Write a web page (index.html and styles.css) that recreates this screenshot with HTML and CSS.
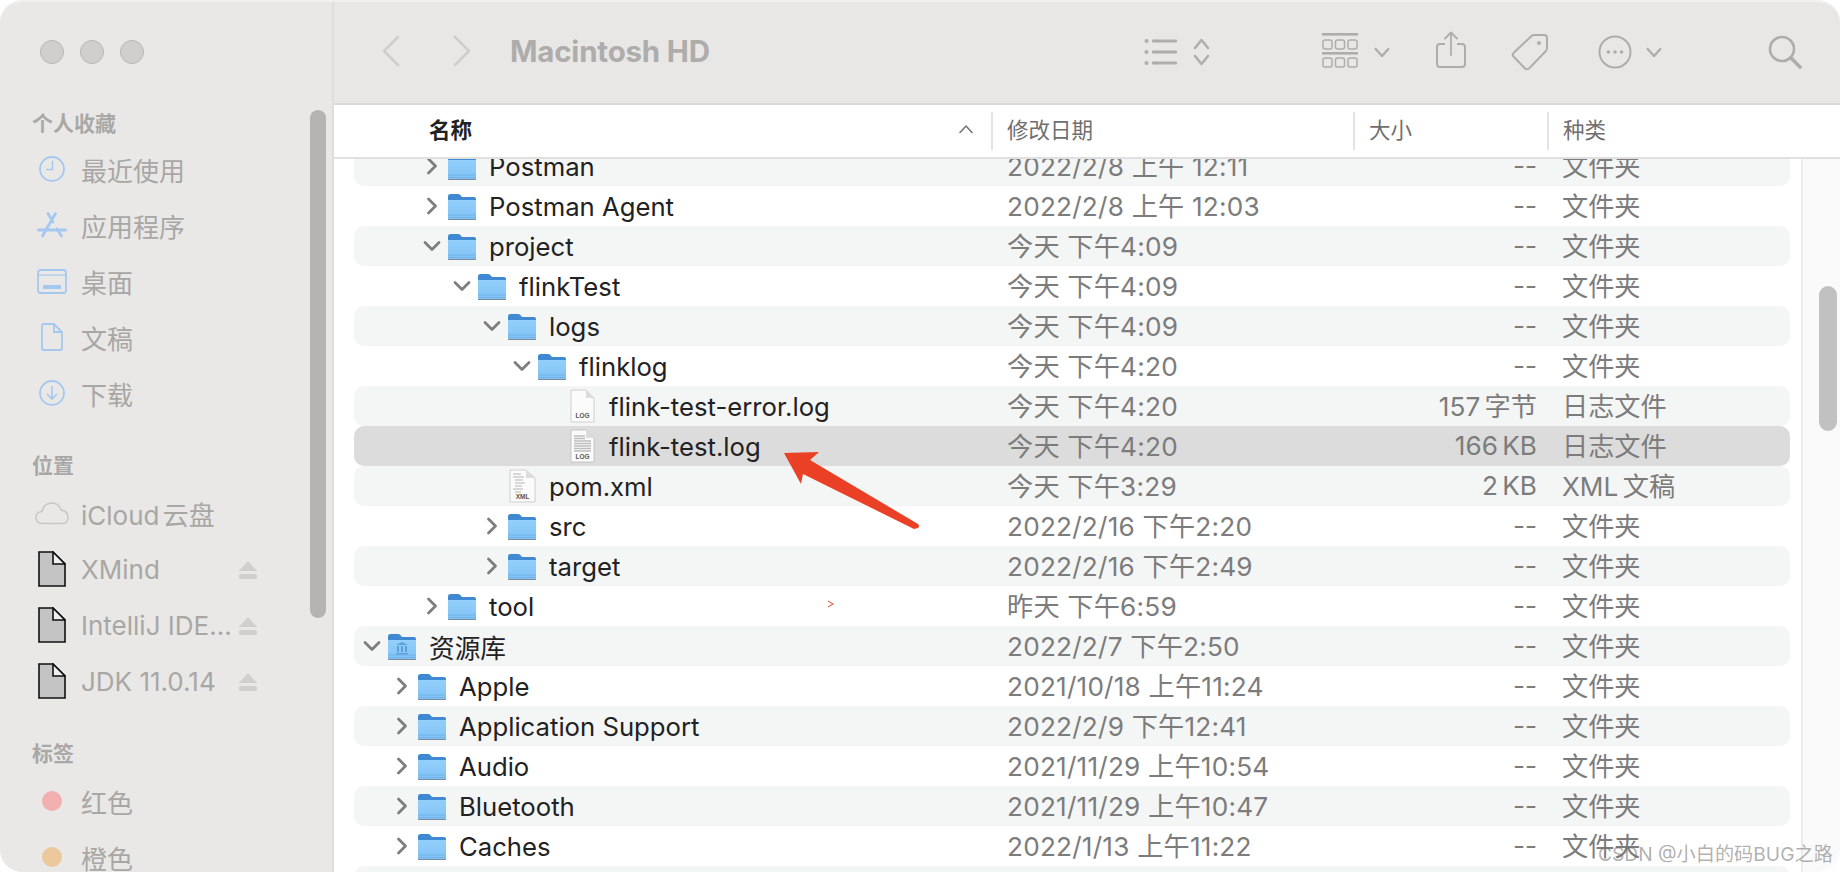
FILE: index.html
```html
<!DOCTYPE html>
<html lang="zh">
<head>
<meta charset="utf-8">
<title>Macintosh HD</title>
<link rel="stylesheet" href="styles.css">
</head>
<body>
<svg class="defs" width="0" height="0" aria-hidden="true">
  <defs>
    <linearGradient id="fb" x1="0" y1="0" x2="0" y2="1"><stop offset="0" stop-color="#93d0fb"/><stop offset="1" stop-color="#80c2f6"/></linearGradient>
    <symbol id="folder" viewBox="0 0 30 30">
      <path d="M1 5.500Q1 3 3.500 3H11q1.500 0 2.500 1.200L15 6H27q2 0 2 2V12H1Z" fill="#3f88d2"/>
      <path d="M1 9H29V27Q29 29 27 29H3Q1 29 1 27Z" fill="url(#fb)"/>
      <path d="M1 24H29M1 26.500H29" stroke="#6fb0e6" stroke-width=".8" fill="none"/>
      <path d="M1 28.500H29" stroke="#7c8b98" stroke-width="1" fill="none"/>
    </symbol>
    <symbol id="gendoc" viewBox="0 0 28 36">
      <path d="M1 1H15L27 13V35H1Z" fill="#c4c4c4" stroke="#111" stroke-width="1.600"/>
      <path d="M15 1V13H27Z" fill="#eee" stroke="#111" stroke-width="1.600"/>
    </symbol>
    <symbol id="eject" viewBox="0 0 20 20">
      <path d="M10 1L19 11H1Z" fill="#d0cfcd"/>
      <rect x="1" y="14" width="18" height="5" rx="1.500" fill="#d0cfcd"/>
    </symbol>
    <symbol id="chev-r" viewBox="0 0 14 20">
      <path d="M3.500 3L10.500 10L3.500 17" fill="none" stroke="#7e7e7e" stroke-width="2.800" stroke-linecap="round" stroke-linejoin="round"/>
    </symbol>
    <symbol id="chev-d" viewBox="0 0 20 14">
      <path d="M3 3.500L10 10.500L17 3.500" fill="none" stroke="#7e7e7e" stroke-width="2.800" stroke-linecap="round" stroke-linejoin="round"/>
    </symbol>
    <symbol id="chev-t" viewBox="0 0 20 14">
      <path d="M3 3L10 11L17 3" fill="none" stroke="#aeadab" stroke-width="2.600" stroke-linecap="round" stroke-linejoin="round"/>
    </symbol>
  </defs>
</svg>

<div class="window">
  <aside class="sidebar">
    <div class="lights"><span class="light"></span><span class="light"></span><span class="light"></span></div>
    <div class="sec-title first">个人收藏</div>
    <div class="side-item"><span class="side-icon"><svg width="28" height="28" viewBox="0 0 28 28"><circle cx="14" cy="14" r="12" fill="none" stroke="#a5c8f0" stroke-width="1.800"/><path d="M14.500 6V14.500H8" fill="none" stroke="#a5c8f0" stroke-width="1.500"/></svg></span>最近使用</div>
    <div class="side-item"><span class="side-icon"><svg width="30" height="28" viewBox="0 0 30 28"><path d="M11 2.500L16 11M24.500 25L20 18M18.500 2.500L5.500 25M1.500 19H28.500" fill="none" stroke="#a5c8f0" stroke-width="2.800" stroke-linecap="round"/></svg></span>应用程序</div>
    <div class="side-item"><span class="side-icon"><svg width="30" height="25" viewBox="0 0 30 25"><rect x="1" y="1" width="28" height="23" rx="2.500" fill="none" stroke="#a5c8f0" stroke-width="1.800"/><path d="M1 6H29" stroke="#a5c8f0" stroke-width="1.200"/><rect x="6" y="16" width="18" height="4" fill="#a5c8f0"/></svg></span>桌面</div>
    <div class="side-item"><span class="side-icon"><svg width="22" height="28" viewBox="0 0 22 28"><path d="M3 1H13L21 9V25Q21 27 19 27H3Q1 27 1 25V3Q1 1 3 1ZM13 1V9H21" fill="none" stroke="#a5c8f0" stroke-width="1.800"/></svg></span>文稿</div>
    <div class="side-item"><span class="side-icon"><svg width="28" height="28" viewBox="0 0 28 28"><circle cx="14" cy="14" r="12" fill="none" stroke="#a5c8f0" stroke-width="1.800"/><path d="M14 7V20M9 15L14 20L19 15" fill="none" stroke="#a5c8f0" stroke-width="1.600"/></svg></span>下载</div>

    <div class="sec-title">位置</div>
    <div class="side-item tight"><span class="side-icon"><svg width="34" height="24" viewBox="0 0 34 24"><path d="M8 22.500Q1 22.500 1 16.500Q1 11 7 10.500Q9 2 17 2Q24 2 26 9Q33 10 33 16.500Q33 22.500 27 22.500Z" fill="none" stroke="#c8c7c5" stroke-width="1.500"/></svg></span>iCloud 云盘</div>
    <div class="side-item"><span class="side-icon"><svg width="28" height="36"><use href="#gendoc"/></svg></span><span class="side-label">XMind</span><svg class="eject" width="20" height="20"><use href="#eject"/></svg></div>
    <div class="side-item"><span class="side-icon"><svg width="28" height="36"><use href="#gendoc"/></svg></span><span class="side-label">IntelliJ IDE...</span><svg class="eject" width="20" height="20"><use href="#eject"/></svg></div>
    <div class="side-item"><span class="side-icon"><svg width="28" height="36"><use href="#gendoc"/></svg></span><span class="side-label">JDK 11.0.14</span><svg class="eject" width="20" height="20"><use href="#eject"/></svg></div>

    <div class="sec-title">标签</div>
    <div class="side-item"><span class="side-icon"><span class="dot red"></span></span>红色</div>
    <div class="side-item"><span class="side-icon"><span class="dot orange"></span></span>橙色</div>
    <div class="side-scroll"></div>
  </aside>

  <main class="main">
    <header class="toolbar">
      <svg class="nav-back" width="20" height="32" viewBox="0 0 20 32"><path d="M17 2L3 16L17 30" fill="none" stroke="#cfcecc" stroke-width="2.600" stroke-linecap="round" stroke-linejoin="round"/></svg>
      <svg class="nav-fwd" width="20" height="32" viewBox="0 0 20 32"><path d="M3 2L17 16L3 30" fill="none" stroke="#cfcecc" stroke-width="2.600" stroke-linecap="round" stroke-linejoin="round"/></svg>
      <div class="title">Macintosh HD</div>
      <div class="tools">
        <svg class="t-list" width="66" height="30" viewBox="0 0 66 30"><g fill="#aeadab"><circle cx="2.500" cy="4" r="2"/><circle cx="2.500" cy="15" r="2"/><circle cx="2.500" cy="26" r="2"/><rect x="8" y="2.500" width="25" height="3" rx="1"/><rect x="8" y="13.500" width="25" height="3" rx="1"/><rect x="8" y="24.500" width="25" height="3" rx="1"/></g><path d="M51 11L57.500 3L64 11M51 19L57.500 27L64 19" fill="none" stroke="#aeadab" stroke-width="2.400" stroke-linecap="round" stroke-linejoin="round"/></svg>
        <svg class="t-grid" width="36" height="36" viewBox="0 0 36 36"><g fill="none" stroke="#aeadab" stroke-width="1.500"><rect x="1" y="7" width="9" height="9" rx="2"/><rect x="13.500" y="7" width="9" height="9" rx="2"/><rect x="26" y="7" width="9" height="9" rx="2"/><rect x="1" y="25" width="9" height="9" rx="2"/><rect x="13.500" y="25" width="9" height="9" rx="2"/><rect x="26" y="25" width="9" height="9" rx="2"/></g><rect y="0" width="36" height="2.600" fill="#aeadab"/><rect y="19" width="36" height="2.600" fill="#aeadab"/></svg>
        <svg class="t-chev1" width="18" height="13"><use href="#chev-t"/></svg>
        <svg class="t-share" width="30" height="38" viewBox="0 0 30 38"><path d="M9 13H4Q1 13 1 16V33Q1 36 4 36H26Q29 36 29 33V16Q29 13 26 13H21" fill="none" stroke="#aeadab" stroke-width="2"/><path d="M15 24V2M9 7.500L15 1.500L21 7.500" fill="none" stroke="#aeadab" stroke-width="1.800" stroke-linecap="round" stroke-linejoin="round"/></svg>
        <svg class="t-tag" width="38" height="38" viewBox="0 0 38 38"><path d="M23 2H33Q36 2 36 5V15Q36 17 34.500 18.500L18 35.500Q16 37 14 35.500L2.500 23.500Q1 22 2.500 20L20 3.500Q21 2 23 2Z" fill="none" stroke="#aeadab" stroke-width="2"/><circle cx="28" cy="10" r="2" fill="#aeadab"/></svg>
        <svg class="t-more" width="34" height="34" viewBox="0 0 34 34"><circle cx="17" cy="17" r="15.500" fill="none" stroke="#aeadab" stroke-width="2"/><g fill="#aeadab"><circle cx="10.500" cy="17" r="1.800"/><circle cx="17" cy="17" r="1.800"/><circle cx="23.500" cy="17" r="1.800"/></g></svg>
        <svg class="t-chev2" width="18" height="13"><use href="#chev-t"/></svg>
        <svg class="t-search" width="34" height="34" viewBox="0 0 34 34"><circle cx="14" cy="14" r="12" fill="none" stroke="#aeadab" stroke-width="2.600"/><path d="M23 23L32 32" stroke="#aeadab" stroke-width="3.600" stroke-linecap="round"/></svg>
      </div>
    </header>

    <div class="head">
      <div class="h-name"><span>名称</span><svg width="16" height="10" viewBox="0 0 16 10"><path d="M2 8.500L8 2L14 8.500" fill="none" stroke="#777" stroke-width="1.600" stroke-linecap="round" stroke-linejoin="round"/></svg></div>
      <div class="h-date">修改日期</div>
      <div class="h-size">大小</div>
      <div class="h-kind">种类</div>
    </div>

    <div class="body">
      <div class="list">
        <div class="row stripe d2"><div class="name"><span class="disc"><svg width="14" height="20"><use href="#chev-r"/></svg></span><svg class="ic" width="30" height="30"><use href="#folder"/></svg><span class="label">Postman</span></div><div class="date">2022/2/8 上午 12:11</div><div class="size">--</div><div class="kind">文件夹</div></div>
        <div class="row d2"><div class="name"><span class="disc"><svg width="14" height="20"><use href="#chev-r"/></svg></span><svg class="ic" width="30" height="30"><use href="#folder"/></svg><span class="label">Postman Agent</span></div><div class="date">2022/2/8 上午 12:03</div><div class="size">--</div><div class="kind">文件夹</div></div>
        <div class="row stripe d2"><div class="name"><span class="disc"><svg width="20" height="14"><use href="#chev-d"/></svg></span><svg class="ic" width="30" height="30"><use href="#folder"/></svg><span class="label">project</span></div><div class="date">今天 下午4:09</div><div class="size">--</div><div class="kind">文件夹</div></div>
        <div class="row d3"><div class="name"><span class="disc"><svg width="20" height="14"><use href="#chev-d"/></svg></span><svg class="ic" width="30" height="30"><use href="#folder"/></svg><span class="label">flinkTest</span></div><div class="date">今天 下午4:09</div><div class="size">--</div><div class="kind">文件夹</div></div>
        <div class="row stripe d4"><div class="name"><span class="disc"><svg width="20" height="14"><use href="#chev-d"/></svg></span><svg class="ic" width="30" height="30"><use href="#folder"/></svg><span class="label">logs</span></div><div class="date">今天 下午4:09</div><div class="size">--</div><div class="kind">文件夹</div></div>
        <div class="row d5"><div class="name"><span class="disc"><svg width="20" height="14"><use href="#chev-d"/></svg></span><svg class="ic" width="30" height="30"><use href="#folder"/></svg><span class="label">flinklog</span></div><div class="date">今天 下午4:20</div><div class="size">--</div><div class="kind">文件夹</div></div>
        <div class="row stripe d6"><div class="name"><span class="disc"></span><svg class="ic" width="30" height="34" viewBox="0 0 30 34"><path d="M4 1H19L27 9V33H4Z" fill="#fbfbfb" stroke="#c4c4c4" stroke-width=".8"/><path d="M19 1V9H27Z" fill="#dcdcdc"/><text x="15.500" y="28.500" class="ftag">LOG</text></svg><span class="label">flink-test-error.log</span></div><div class="date">今天 下午4:20</div><div class="size">157 字节</div><div class="kind">日志文件</div></div>
        <div class="row selected d6"><div class="name"><span class="disc"></span><svg class="ic" width="30" height="34" viewBox="0 0 30 34"><path d="M4 1H19L27 9V33H4Z" fill="#fbfbfb" stroke="#bbb" stroke-width=".8"/><path d="M19 1V9H27Z" fill="#dcdcdc"/><path d="M7 7H18M7 9.500H18M7 12H24M7 14.500H24M7 17H24M7 19.500H24M7 22H24" stroke="#bdbdbd" stroke-width="1.300" fill="none"/><text x="15.500" y="30" class="ftag">LOG</text></svg><span class="label">flink-test.log</span></div><div class="date">今天 下午4:20</div><div class="size">166 KB</div><div class="kind">日志文件</div></div>
        <div class="row stripe d4"><div class="name"><span class="disc"></span><svg class="ic" width="30" height="34" viewBox="0 0 30 34"><path d="M3 1H19L28 9V33H3Z" fill="#fbfbfb" stroke="#c4c4c4" stroke-width=".8"/><path d="M19 1V9H28Z" fill="#dcdcdc"/><path d="M6 5H14M6 8H17M8 11H16M8 14H18M8 17H15M6 20H16M8 23H14" stroke="#b5b5b5" stroke-width="1.200" fill="none"/><text x="15.500" y="30" class="ftag">XML</text></svg><span class="label">pom.xml</span></div><div class="date">今天 下午3:29</div><div class="size">2 KB</div><div class="kind">XML 文稿</div></div>
        <div class="row d4"><div class="name"><span class="disc"><svg width="14" height="20"><use href="#chev-r"/></svg></span><svg class="ic" width="30" height="30"><use href="#folder"/></svg><span class="label">src</span></div><div class="date">2022/2/16 下午2:20</div><div class="size">--</div><div class="kind">文件夹</div></div>
        <div class="row stripe d4"><div class="name"><span class="disc"><svg width="14" height="20"><use href="#chev-r"/></svg></span><svg class="ic" width="30" height="30"><use href="#folder"/></svg><span class="label">target</span></div><div class="date">2022/2/16 下午2:49</div><div class="size">--</div><div class="kind">文件夹</div></div>
        <div class="row d2"><div class="name"><span class="disc"><svg width="14" height="20"><use href="#chev-r"/></svg></span><svg class="ic" width="30" height="30"><use href="#folder"/></svg><span class="label">tool</span></div><div class="date">昨天 下午6:59</div><div class="size">--</div><div class="kind">文件夹</div></div>
        <div class="row stripe d0"><div class="name"><span class="disc"><svg width="20" height="14"><use href="#chev-d"/></svg></span><svg class="ic" width="30" height="30" viewBox="0 0 30 30"><use href="#folder"/><path d="M9 14L15 11L21 14ZM10 15H12V21H10ZM14 15H16V21H14ZM18 15H20V21H18ZM9 22H21V23.500H9Z" fill="#5f9fd8"/></svg><span class="label">资源库</span></div><div class="date">2022/2/7 下午2:50</div><div class="size">--</div><div class="kind">文件夹</div></div>
        <div class="row d1"><div class="name"><span class="disc"><svg width="14" height="20"><use href="#chev-r"/></svg></span><svg class="ic" width="30" height="30"><use href="#folder"/></svg><span class="label">Apple</span></div><div class="date">2021/10/18 上午11:24</div><div class="size">--</div><div class="kind">文件夹</div></div>
        <div class="row stripe d1"><div class="name"><span class="disc"><svg width="14" height="20"><use href="#chev-r"/></svg></span><svg class="ic" width="30" height="30"><use href="#folder"/></svg><span class="label">Application Support</span></div><div class="date">2022/2/9 下午12:41</div><div class="size">--</div><div class="kind">文件夹</div></div>
        <div class="row d1"><div class="name"><span class="disc"><svg width="14" height="20"><use href="#chev-r"/></svg></span><svg class="ic" width="30" height="30"><use href="#folder"/></svg><span class="label">Audio</span></div><div class="date">2021/11/29 上午10:54</div><div class="size">--</div><div class="kind">文件夹</div></div>
        <div class="row stripe d1"><div class="name"><span class="disc"><svg width="14" height="20"><use href="#chev-r"/></svg></span><svg class="ic" width="30" height="30"><use href="#folder"/></svg><span class="label">Bluetooth</span></div><div class="date">2021/11/29 上午10:47</div><div class="size">--</div><div class="kind">文件夹</div></div>
        <div class="row d1"><div class="name"><span class="disc"><svg width="14" height="20"><use href="#chev-r"/></svg></span><svg class="ic" width="30" height="30"><use href="#folder"/></svg><span class="label">Caches</span></div><div class="date">2022/1/13 上午11:22</div><div class="size">--</div><div class="kind">文件夹</div></div>
        <div class="row stripe d1"></div>
      </div>
      <div class="track"><div class="thumb"></div></div>
    </div>
  </main>
</div>

<svg class="arrow" width="150" height="90" viewBox="0 0 150 90"><path d="M2 2L37 1L28 9L136 73Q138 75 136 77L132 78L21 23L19 33Z" fill="#ea4026"/></svg>
<svg class="speck" width="8" height="8" viewBox="0 0 8 8"><path d="M1 1L6 4L1 7" fill="none" stroke="#ea6a55" stroke-width="1.200"/></svg>
<div class="watermark">CSDN @小白的码BUG之路</div>
</body>
</html>
```
FILE: styles.css
```css
* { box-sizing: border-box; }
html, body { margin: 0; height: 100%; background: #fff; overflow: hidden; }
body { position: relative; font-family: "Inter", "Noto Sans CJK SC", sans-serif; }
.defs { position: absolute; }

.window { display: flex; width: 1840px; height: 872px; border-radius: 22px; overflow: hidden; border-top: 2px solid #f1f0ef; }

/* sidebar */
.sidebar { position: relative; width: 334px; flex: none; background: #e9e8e7; border-right: 2px solid #dfdedd; color: #a8a7a5; font-size: 26px; padding-top: 38px; }
.lights { display: flex; gap: 16px; padding-left: 40px; height: 24px; }
.light { width: 24px; height: 24px; border-radius: 50%; background: #d0cfcd; border: 1px solid #b7b6b4; }
.sec-title { font-size: 21px; font-weight: 700; color: #a9a8a6; height: 53px; line-height: 24px; padding: 22px 0 0 32px; margin-top: 11px; }
.sec-title.first { height: 29px; padding-top: 0; margin-top: 48px; }
.side-item { display: flex; align-items: center; height: 56px; padding-left: 81px; position: relative; white-space: nowrap; }
.tight { word-spacing: -4px; }
.side-icon { position: absolute; left: 32px; width: 40px; height: 56px; display: flex; align-items: center; justify-content: center; }
.side-label { flex: none; }
.eject { position: absolute; left: 238px; top: 19px; }
.dot { width: 20px; height: 20px; border-radius: 50%; }
.red { background: #f1afaf; }
.orange { background: #ebc99d; }
.side-scroll { position: absolute; left: 310px; top: 108px; width: 16px; height: 508px; border-radius: 8px; background: #b5b4b2; }

/* main */
.main { flex: 1; min-width: 0; display: flex; flex-direction: column; background: #fff; }
.toolbar { position: relative; height: 103px; flex: none; background: #e8e7e6; border-bottom: 2px solid #dcdbda; }
.title { position: absolute; left: 176px; top: 31px; font-size: 29.500px; font-weight: 700; color: #aeadab; letter-spacing: -.2px; white-space: nowrap; }
.nav-back { position: absolute; left: 47px; top: 33px; }
.nav-fwd { position: absolute; left: 118px; top: 33px; }
.tools svg { position: absolute; }
.t-list { left: 810px; top: 35px; }
.t-grid { left: 988px; top: 31px; }
.t-chev1 { left: 1039px; top: 44px; }
.t-share { left: 1102px; top: 29px; }
.t-tag { left: 1177px; top: 31px; }
.t-more { left: 1264px; top: 33px; }
.t-chev2 { left: 1311px; top: 44px; }
.t-search { left: 1434px; top: 33px; }

/* column header */
.head { height: 54px; flex: none; display: flex; align-items: center; background: #fff; border-bottom: 2px solid #e0e0e0; font-size: 21.500px; color: #6f6f6f; }
.head > div { height: 38px; display: flex; align-items: center; white-space: nowrap; padding-bottom: 5px; }
.h-name { width: 657px; padding-right: 17px; padding-left: 95px; justify-content: space-between; color: #222; font-weight: 700; }
.h-date, .h-size, .h-kind { border-left: 2px solid #e3e3e3; padding-left: 14px; }
.h-date { width: 362px; }
.h-size { width: 194px; }
.h-kind { flex: 1; }

/* list */
.body { flex: 1; min-height: 0; display: flex; }
.list { flex: 1; min-width: 0; overflow: hidden; padding: 0 11px 0 20px; }
.row { height: 40px; display: flex; align-items: center; border-radius: 10px; font-size: 26.200px; color: #7c7c7c; white-space: nowrap; }
.row:first-child { margin-top: -13px; border-radius: 0 0 10px 10px; }
.stripe { background: #f4f5f5; }
.selected { background: #dcdcdc; }
.name { width: 653px; display: flex; align-items: center; flex: none; color: #222; font-size: 25.700px; }
.d0 .name { padding-left: 3px; }
.d1 .name { padding-left: 33px; }
.d2 .name { padding-left: 63px; }
.d3 .name { padding-left: 93px; }
.d4 .name { padding-left: 123px; }
.d5 .name { padding-left: 153px; }
.d6 .name { padding-left: 183px; }
.disc { width: 30px; height: 30px; display: flex; align-items: center; justify-content: center; flex: none; }
.ic { flex: none; }
.label { margin-left: 12px; }
.date { width: 393px; flex: none; letter-spacing: .2px; padding-bottom: 2px; }
.size { width: 137px; flex: none; text-align: right; word-spacing: -3px; padding-bottom: 2px; }
.kind { margin-left: 25px; word-spacing: -3px; padding-bottom: 2px; }
.ftag { font: 700 6.500px "Liberation Sans", sans-serif; fill: #555; text-anchor: middle; }

.track { width: 39px; flex: none; background: #fafafa; border-left: 2px solid #ececec; position: relative; }
.thumb { position: absolute; left: 16px; top: 127px; width: 18px; height: 145px; border-radius: 9px; background: #c1c1c1; }

/* overlays */
.arrow { position: absolute; left: 782px; top: 451px; }
.speck { position: absolute; left: 827px; top: 600px; }
.watermark { position: absolute; left: 1598px; top: 840px; font-size: 19.200px; line-height: 28px; color: rgba(110,110,110,.55); white-space: nowrap; }
```
